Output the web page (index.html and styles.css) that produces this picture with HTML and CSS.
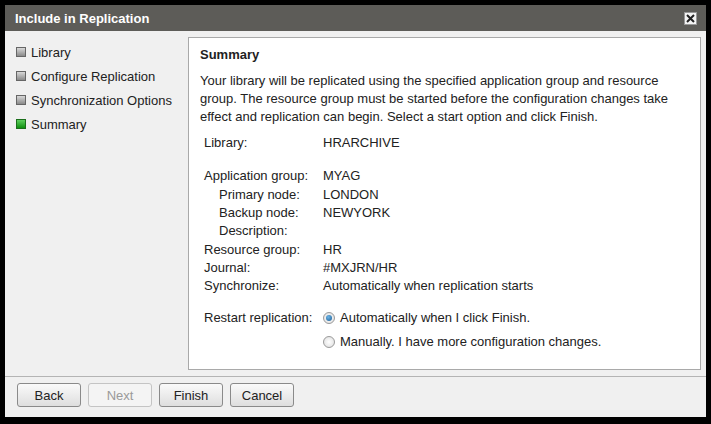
FILE: index.html
```html
<!DOCTYPE html>
<html lang="en">
<head>
    <meta charset="UTF-8">
    <title>Include in Replication</title>
    <link rel="stylesheet" href="styles.css">
</head>
<body>
    <div class="dialog">
        <div class="titlebar">
            <span class="title">Include in Replication</span>
            <span class="close">
                <svg width="9" height="9" viewBox="0 0 9 9"><path d="M1 1L8 8M8 1L1 8" stroke="#222" stroke-width="2"/></svg>
            </span>
        </div>

        <div class="main">
            <ul class="steps">
                <li><span class="box"></span>Library</li>
                <li><span class="box"></span>Configure Replication</li>
                <li><span class="box"></span>Synchronization Options</li>
                <li><span class="box current"></span>Summary</li>
            </ul>

            <div class="panel">
                <h2>Summary</h2>
                <p class="intro">Your library will be replicated using the specified application group and resource group. The resource group must be started before the configuration changes take effect and replication can begin. Select a start option and click Finish.</p>

                <div class="details">
                    <div class="row"><span class="label">Library:</span><span>HRARCHIVE</span></div>
                    <div class="row gap"><span class="label">Application group:</span><span>MYAG</span></div>
                    <div class="row"><span class="label sub">Primary node:</span><span>LONDON</span></div>
                    <div class="row"><span class="label sub">Backup node:</span><span>NEWYORK</span></div>
                    <div class="row"><span class="label sub">Description:</span><span></span></div>
                    <div class="row"><span class="label">Resource group:</span><span>HR</span></div>
                    <div class="row"><span class="label">Journal:</span><span>#MXJRN/HR</span></div>
                    <div class="row"><span class="label">Synchronize:</span><span>Automatically when replication starts</span></div>

                    <div class="row restart">
                        <span class="label">Restart replication:</span>
                        <div class="options">
                            <label class="option"><span class="radio checked"></span>Automatically when I click Finish.</label>
                            <label class="option"><span class="radio"></span>Manually. I have more configuration changes.</label>
                        </div>
                    </div>
                </div>
            </div>
        </div>

        <div class="footer">
            <button class="btn">Back</button>
            <button class="btn" disabled>Next</button>
            <button class="btn">Finish</button>
            <button class="btn">Cancel</button>
        </div>
    </div>
</body>
</html>
```

FILE: styles.css
```css
body {
    margin: 0;
    background-color: #000;
    font-family: "Liberation Sans", Arial, sans-serif;
    font-size: 13px;
    color: #222;
}

.dialog {
    margin: 5px 5px 0 5px;
    width: 701px;
    height: 412px;
    background-color: #f0f0f0;
    display: flex;
    flex-direction: column;
}

.titlebar {
    height: 26px;
    flex-shrink: 0;
    background-color: #5d5c58;
    display: flex;
    align-items: center;
    justify-content: space-between;
    padding: 0 9px 0 10px;
}

.title {
    color: #fff;
    font-weight: bold;
    font-size: 13px;
}

.close {
    width: 11px;
    height: 11px;
    background-color: #f4f4f4;
    border: 1px solid #999;
    display: flex;
    align-items: center;
    justify-content: center;
}

.main {
    display: flex;
    height: 333px;
    flex-shrink: 0;
    padding: 6px 5px 6px 0;
    border-bottom: 1px solid #b4b4b4;
}

.steps {
    list-style: none;
    margin: 0;
    padding: 3px 0 0 11px;
    width: 172px;
}

.steps li {
    height: 24px;
    display: flex;
    align-items: center;
    white-space: nowrap;
}

.box {
    width: 8px;
    height: 8px;
    border: 1px solid #666;
    background: linear-gradient(#d8d8d8, #8a8a8a);
    margin-right: 5px;
}

.box.current {
    border-color: #1b6e1b;
    background: linear-gradient(#5ed05e, #0f8f0f);
}

.panel {
    flex: 1;
    background-color: #fff;
    border: 1px solid #a9a9a9;
    padding: 9px 11px 0 11px;
}

.panel h2 {
    margin: 0 0 10px 0;
    font-size: 13px;
    font-weight: bold;
}

.intro {
    margin: 0 0 8px 0;
    line-height: 18px;
}

.details {
    padding-left: 4px;
}

.row {
    display: flex;
    line-height: 18.33px;
}

.row.gap {
    margin-top: 15px;
}

.label {
    width: 119px;
    flex-shrink: 0;
}

.label.sub {
    padding-left: 15px;
    width: 104px;
}

.restart {
    margin-top: 13px;
}

.options {
    display: flex;
    flex-direction: column;
    gap: 6px;
}

.option {
    display: flex;
    align-items: center;
}

.radio {
    width: 10px;
    height: 10px;
    border-radius: 50%;
    border: 1px solid #9a9a9a;
    background: radial-gradient(#fff, #dcdcdc);
    margin-right: 5px;
    position: relative;
}

.radio.checked::after {
    content: "";
    position: absolute;
    left: 2px;
    top: 2px;
    width: 6px;
    height: 6px;
    border-radius: 50%;
    background: radial-gradient(circle at 40% 35%, #6cb4e6, #1c5d94);
}

.footer {
    display: flex;
    gap: 7px;
    padding: 6px 0 0 12px;
}

.btn {
    width: 64px;
    height: 24px;
    font-family: "Liberation Sans", Arial, sans-serif;
    font-size: 13px;
    color: #222;
    border: 1px solid #8a8a8a;
    border-radius: 3px;
    background: linear-gradient(#fafafa, #dedede);
    padding: 0;
}

.btn:disabled {
    color: #9a9a9a;
    border-color: #c4c4c4;
    background: #f4f4f4;
}
```
